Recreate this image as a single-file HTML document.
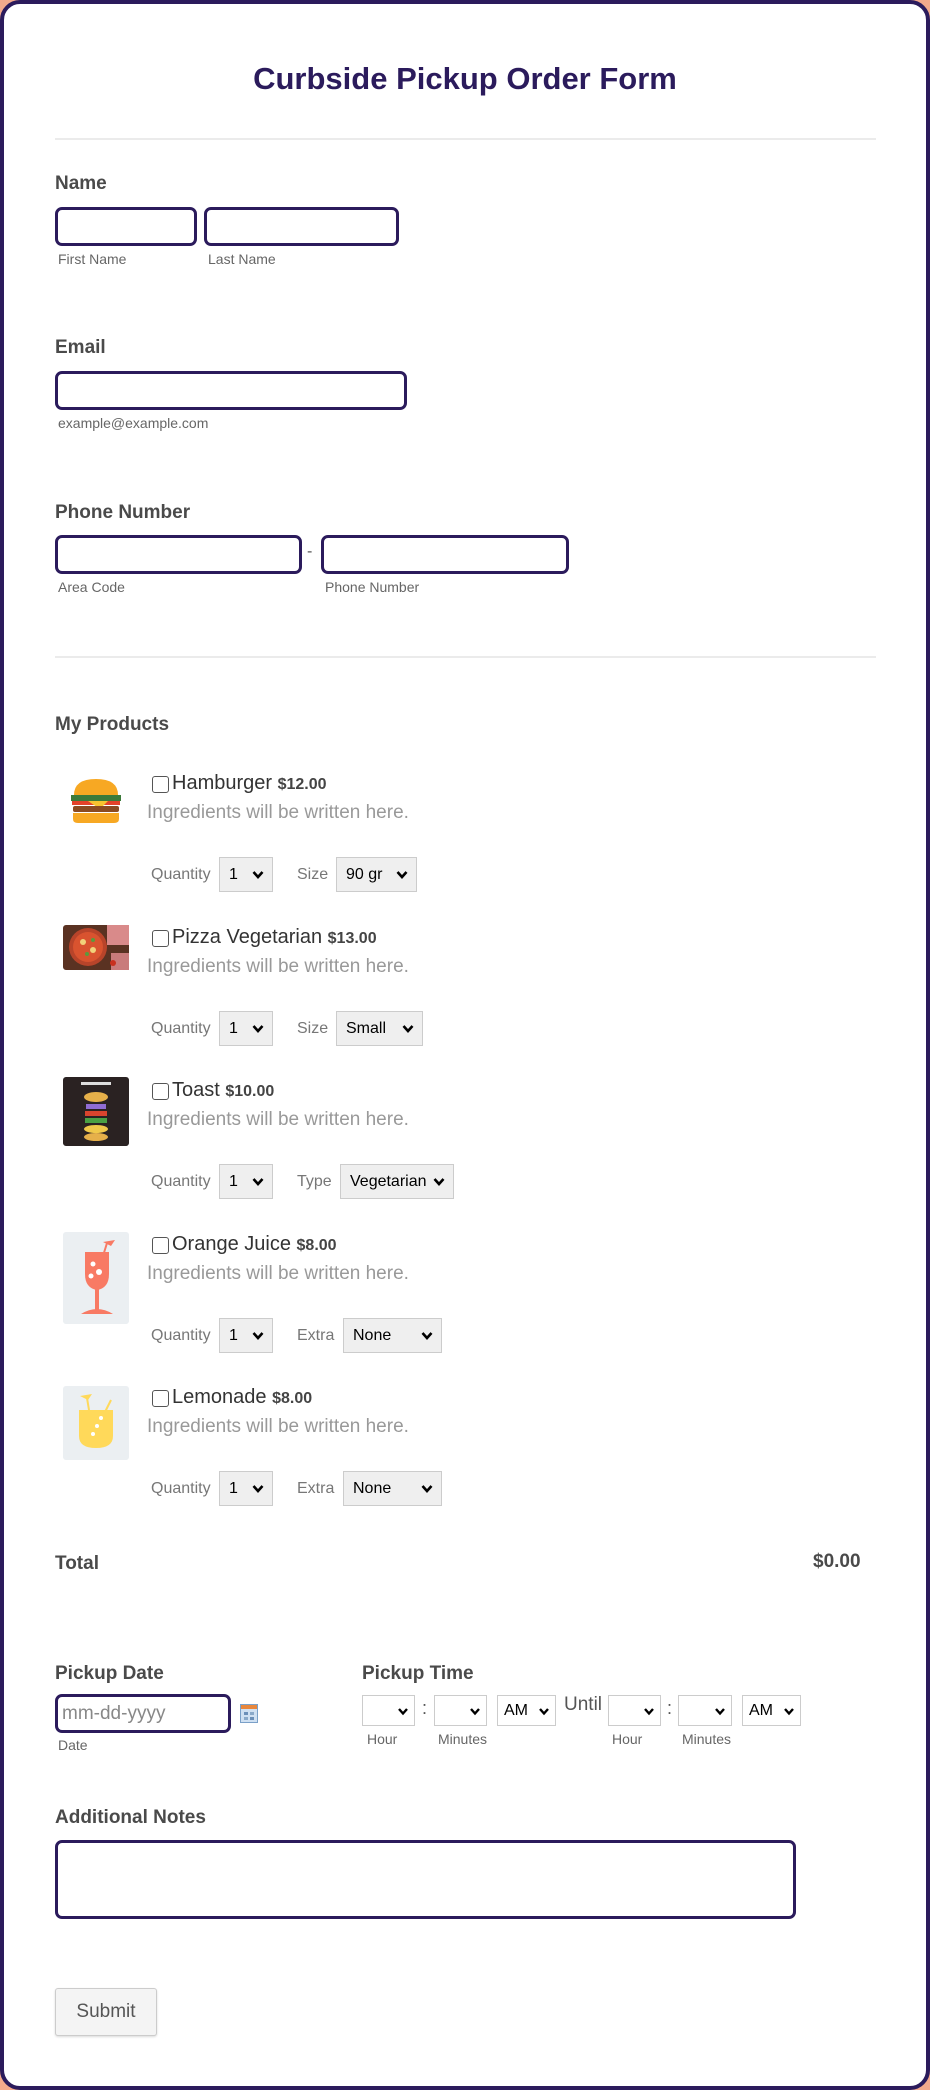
<!DOCTYPE html>
<html><head><meta charset="utf-8"><style>
*{box-sizing:border-box;margin:0;padding:0}
html,body{width:930px;height:2090px;overflow:hidden;background:#f3a98c}
body{font-family:"Liberation Sans",Arial,sans-serif;position:relative}
.card{position:absolute;left:0;top:0;width:930px;height:2090px;background:#fff;border:4px solid #2b1b5c;border-radius:20px}
.a{position:absolute;white-space:nowrap}
.lbl{font-size:19px;font-weight:bold;color:#4a4a4a}
.sub{font-size:14px;color:#666}
.in{position:absolute;border:3px solid #2b1b5c;border-radius:7px;background:#fff}
.hr{position:absolute;left:55px;width:821px;height:2px;background:#ebebeb}
.sel{position:absolute;height:35px;border:1px solid #ccc;background:#efefef;font-size:16px;color:#000;padding-left:9px;line-height:33px}
.sel svg{position:absolute;right:8px;top:12px}
.cb{position:absolute;width:17px;height:17px;border:1.5px solid #555;border-radius:3px;background:#fff}
.pt{font-size:20px;color:#333}
.pt b{font-size:16px;color:#444}
.ing{font-size:19px;color:#999}
.ql{font-size:16px;color:#777}
.ts{position:absolute;height:31px;top:1695px;border:1px solid #ccc;background:#fff;font-size:16px;padding-left:6px;line-height:29px}
.ts svg{position:absolute;right:6px;top:11px}
</style></head><body>
<div class="card"></div>
<div class="a" style="left:0;width:930px;text-align:center;top:61px;font-size:31px;font-weight:bold;color:#2b1b5c">Curbside Pickup Order Form</div>
<div class="hr" style="top:138px"></div>

<div class="a lbl" style="left:55px;top:173px">Name</div>
<div class="in" style="left:55px;top:207px;width:142px;height:39px"></div>
<div class="in" style="left:204px;top:207px;width:195px;height:39px"></div>
<div class="a sub" style="left:58px;top:251px">First Name</div>
<div class="a sub" style="left:208px;top:251px">Last Name</div>

<div class="a lbl" style="left:55px;top:337px">Email</div>
<div class="in" style="left:55px;top:371px;width:352px;height:39px"></div>
<div class="a sub" style="left:58px;top:415px">example@example.com</div>

<div class="a lbl" style="left:55px;top:502px">Phone Number</div>
<div class="in" style="left:55px;top:535px;width:247px;height:39px"></div>
<div class="a" style="left:307px;top:543px;font-size:16px;color:#555">-</div>
<div class="in" style="left:321px;top:535px;width:248px;height:39px"></div>
<div class="a sub" style="left:58px;top:579px">Area Code</div>
<div class="a sub" style="left:325px;top:579px">Phone Number</div>

<div class="hr" style="top:656px"></div>
<div class="a lbl" style="left:55px;top:714px">My Products</div>

<svg class="a" style="left:68px;top:777px" width="56" height="48" viewBox="0 0 56 48"><path d="M6 18 Q6 2 28 2 Q50 2 50 18Z" fill="#f7a823"/><rect x="3" y="18" width="50" height="6" fill="#3c7a3a"/><path d="M4 24 L52 24 L52 28 L4 28Z" fill="#e3432a"/><path d="M20 24 L40 24 L32 32Z" fill="#f6c330"/><rect x="5" y="29" width="46" height="6" rx="2" fill="#8b4b22"/><path d="M5 36 L51 36 L51 42 Q51 46 46 46 L10 46 Q5 46 5 42Z" fill="#f7a823"/></svg>
<svg class="a" style="left:63px;top:925px" width="66" height="45" viewBox="0 0 66 45"><rect width="66" height="45" rx="3" fill="#5a3222"/><rect x="44" y="0" width="22" height="20" fill="#d98a8a"/><rect x="48" y="28" width="18" height="17" fill="#c97b7b"/><circle cx="25" cy="22" r="19" fill="#b8442a"/><circle cx="25" cy="22" r="15" fill="#d9532f"/><circle cx="20" cy="17" r="3" fill="#f1d27a"/><circle cx="30" cy="25" r="3" fill="#f1d27a"/><circle cx="24" cy="29" r="2" fill="#5b9a3c"/><circle cx="30" cy="15" r="2" fill="#5b9a3c"/><circle cx="50" cy="38" r="3" fill="#c8301e"/></svg>
<svg class="a" style="left:63px;top:1077px" width="66" height="69" viewBox="0 0 66 69"><rect width="66" height="69" rx="3" fill="#2a2222"/><rect x="18" y="5" width="30" height="3" fill="#ddd"/><ellipse cx="33" cy="20" rx="12" ry="5" fill="#e6b04a"/><rect x="23" y="27" width="20" height="5" fill="#8f6cd3"/><rect x="22" y="34" width="22" height="5" fill="#d9442e"/><rect x="22" y="41" width="22" height="5" fill="#4aa043"/><ellipse cx="33" cy="52" rx="12" ry="4" fill="#f0c84a"/><ellipse cx="33" cy="60" rx="12" ry="4" fill="#e6b04a"/></svg>
<svg class="a" style="left:63px;top:1232px" width="66" height="92" viewBox="0 0 66 92"><rect width="66" height="92" rx="3" fill="#ebeff2"/><path d="M22 20 L46 20 L46 42 Q46 56 34 58 Q22 56 22 42Z" fill="#f87a64"/><rect x="32" y="57" width="4" height="22" fill="#f87a64"/><path d="M18 82 Q34 72 50 82Z" fill="#f87a64"/><path d="M40 10 L52 8 L48 14Z" fill="#f87a64"/><line x1="44" y1="11" x2="40" y2="24" stroke="#f87a64" stroke-width="2"/><circle cx="30" cy="32" r="2.5" fill="#fff"/><circle cx="36" cy="40" r="3" fill="#fff"/><circle cx="28" cy="44" r="2.5" fill="#fff"/></svg>
<svg class="a" style="left:63px;top:1386px" width="66" height="74" viewBox="0 0 66 74"><rect width="66" height="74" rx="3" fill="#ebeff2"/><path d="M16 24 L50 24 L50 50 Q50 62 33 62 Q16 62 16 50Z" fill="#ffd95a"/><path d="M17 10 L29 8 L25 14Z" fill="#ffd95a"/><line x1="24" y1="12" x2="26" y2="24" stroke="#ffd95a" stroke-width="2"/><line x1="48" y1="14" x2="42" y2="26" stroke="#ffd95a" stroke-width="2"/><circle cx="38" cy="32" r="2" fill="#fff"/><circle cx="34" cy="40" r="2" fill="#fff"/><circle cx="30" cy="48" r="2" fill="#fff"/></svg>

<div id="prods"></div>
<script>
var P=[["Hamburger","$12.00","Size","90 gr",81],["Pizza Vegetarian","$13.00","Size","Small",87],["Toast","$10.00","Type","Vegetarian",114],["Orange Juice","$8.00","Extra","None",99],["Lemonade","$8.00","Extra","None",99]];
var chev='<svg width="12" height="10" viewBox="0 0 12 10"><path d="M1.5 2 L6 7 L10.5 2" fill="none" stroke="#000" stroke-width="2.6"/></svg>';
var h='';
P.forEach(function(p,i){
 var T=784+i*153.5;
 var sx=p[2]=="Size"?336:(p[2]=="Type"?340:343);
 h+='<div class="cb" style="left:152px;top:'+(T-8)+'px"></div>';
 h+='<div class="a pt" style="left:172px;top:'+(T-12)+'px">'+p[0]+' <b>'+p[1]+'</b></div>';
 h+='<div class="a ing" style="left:147px;top:'+(T+18)+'px">Ingredients will be written here.</div>';
 h+='<div class="a ql" style="left:151px;top:'+(T+82)+'px">Quantity</div>';
 h+='<div class="sel" style="left:219px;top:'+(T+73)+'px;width:54px">1'+chev+'</div>';
 h+='<div class="a ql" style="left:297px;top:'+(T+82)+'px">'+p[2]+'</div>';
 h+='<div class="sel" style="left:'+sx+'px;top:'+(T+73)+'px;width:'+p[4]+'px">'+p[3]+chev+'</div>';
});
document.getElementById('prods').innerHTML=h;
</script>

<div class="a lbl" style="left:55px;top:1553px">Total</div>
<div class="a lbl" style="left:813px;top:1551px">$0.00</div>

<div class="a lbl" style="left:55px;top:1663px">Pickup Date</div>
<div class="in" style="left:55px;top:1694px;width:176px;height:39px"></div>
<div class="a" style="left:62px;top:1703px;font-size:19px;color:#888">mm-dd-yyyy</div>
<svg class="a" style="left:240px;top:1704px" width="18" height="19" viewBox="0 0 18 19"><rect x="0.5" y="0.5" width="17" height="18" fill="#cfe0f2" stroke="#7aa0c8"/><rect x="1" y="1" width="16" height="4" fill="#e8873c"/><rect x="4" y="8" width="4" height="3" fill="#6b8fb8"/><rect x="10" y="8" width="4" height="3" fill="#8aa9c9"/><rect x="4" y="13" width="4" height="3" fill="#8aa9c9"/><rect x="10" y="13" width="4" height="3" fill="#6b8fb8"/></svg>
<div class="a sub" style="left:58px;top:1737px">Date</div>

<div class="a lbl" style="left:362px;top:1663px">Pickup Time</div>
<div id="ts"></div>
<script>
var c2='<svg width="10" height="9" viewBox="0 0 10 9"><path d="M1 2 L5 6.5 L9 2" fill="none" stroke="#000" stroke-width="2.4"/></svg>';
var t=[[362,53,''],[434,53,''],[497,59,'AM'],[608,53,''],[678,54,''],[742,59,'AM']];
var s='';t.forEach(function(x){s+='<div class="ts" style="left:'+x[0]+'px;width:'+x[1]+'px">'+x[2]+c2+'</div>';});
document.getElementById('ts').innerHTML=s;
</script>
<div class="a" style="left:422px;top:1698px;font-size:18px;color:#555">:</div>
<div class="a" style="left:667px;top:1698px;font-size:18px;color:#555">:</div>
<div class="a" style="left:564px;top:1694px;font-size:19px;color:#555">Until</div>
<div class="a sub" style="left:367px;top:1731px">Hour</div>
<div class="a sub" style="left:438px;top:1731px">Minutes</div>
<div class="a sub" style="left:612px;top:1731px">Hour</div>
<div class="a sub" style="left:682px;top:1731px">Minutes</div>

<div class="a lbl" style="left:55px;top:1807px">Additional Notes</div>
<div class="in" style="left:55px;top:1840px;width:741px;height:79px"></div>

<div class="a" style="left:55px;top:1988px;width:102px;height:48px;border:1px solid #ccc;border-radius:3px;background:#f4f4f4;box-shadow:0 1px 2px rgba(0,0,0,.15);font-size:19px;color:#555;text-align:center;line-height:46px">Submit</div>
</body></html>
